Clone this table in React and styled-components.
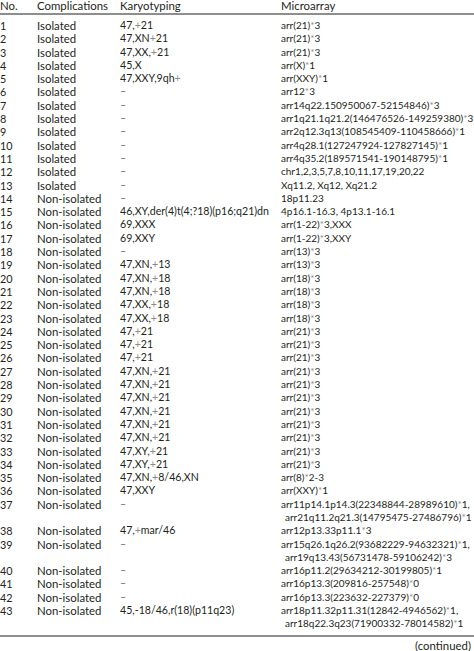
import React from "react";
import styled, { createGlobalStyle } from "styled-components";

const GlobalStyle = createGlobalStyle`
  html, body {
    margin: 0;
    padding: 0;
    background: #ffffff;
  }
  body {
    font-family: Lato, "Liberation Sans", sans-serif;
    color: #231f20;
  }
`;

const Page = styled.div`
  width: 474px;
  overflow: hidden;
  font-size: 11.4px;
  line-height: 13.3px;
`;

const Row = styled.div`
  display: grid;
  grid-template-columns: 37px 83px 161px 1fr;
  white-space: nowrap;
`;

const HeaderRow = styled(Row)`
  line-height: 11px;
  padding-bottom: 2px;
  border-bottom: 2px solid #8e8e8e;
`;

const Body = styled.div`
  padding: 4px 0 4px;
  border-bottom: 2px solid #8e8e8e;
`;

// the digit-heavy columns print narrower in the source face
const Cell = styled.div`
  min-width: 0;
  font-size: ${(p) => p.$size || "inherit"};
`;

const Cont = styled.div`
  padding-left: 4px;
`;

const Sym = styled.span`
  color: #8a8a8a;
`;

const Dash = styled.span`
  color: #6d6d6d;
`;

const Footer = styled.div`
  margin-top: 2px;
  text-align: right;
  padding-right: 3px;
`;

// wrap the + and * glyphs, which print lighter in the source
const fmt = (s) => {
  if (s === "–") return <Dash>–</Dash>;
  return s.split(/([+*])/).map((part, i) =>
    part === "+" || part === "*" ? <Sym key={i}>{part}</Sym> : part
  );
};

const rows = [
  ["1", "Isolated", "47,+21", ["arr(21)*3"]],
  ["2", "Isolated", "47,XN+21", ["arr(21)*3"]],
  ["3", "Isolated", "47,XX,+21", ["arr(21)*3"]],
  ["4", "Isolated", "45,X", ["arr(X)*1"]],
  ["5", "Isolated", "47,XXY,9qh+", ["arr(XXY)*1"]],
  ["6", "Isolated", "–", ["arr12*3"]],
  ["7", "Isolated", "–", ["arr14q22.150950067-52154846)*3"]],
  ["8", "Isolated", "–", ["arr1q21.1q21.2(146476526-149259380)*3"]],
  ["9", "Isolated", "–", ["arr2q12.3q13(108545409-110458666)*1"]],
  ["10", "Isolated", "–", ["arr4q28.1(127247924-127827145)*1"]],
  ["11", "Isolated", "–", ["arr4q35.2(189571541-190148795)*1"]],
  ["12", "Isolated", "–", ["chr1,2,3,5,7,8,10,11,17,19,20,22"]],
  ["13", "Isolated", "–", ["Xq11.2, Xq12, Xq21.2"]],
  ["14", "Non-isolated", "–", ["18p11.23"]],
  ["15", "Non-isolated", "46,XY,der(4)t(4;?18)(p16;q21)dn", ["4p16.1-16.3, 4p13.1-16.1"]],
  ["16", "Non-isolated", "69,XXX", ["arr(1-22)*3,XXX"]],
  ["17", "Non-isolated", "69,XXY", ["arr(1-22)*3,XXY"]],
  ["18", "Non-isolated", "–", ["arr(13)*3"]],
  ["19", "Non-isolated", "47,XN,+13", ["arr(13)*3"]],
  ["20", "Non-isolated", "47,XN,+18", ["arr(18)*3"]],
  ["21", "Non-isolated", "47,XN,+18", ["arr(18)*3"]],
  ["22", "Non-isolated", "47,XX,+18", ["arr(18)*3"]],
  ["23", "Non-isolated", "47,XX,+18", ["arr(18)*3"]],
  ["24", "Non-isolated", "47,+21", ["arr(21)*3"]],
  ["25", "Non-isolated", "47,+21", ["arr(21)*3"]],
  ["26", "Non-isolated", "47,+21", ["arr(21)*3"]],
  ["27", "Non-isolated", "47,XN,+21", ["arr(21)*3"]],
  ["28", "Non-isolated", "47,XN,+21", ["arr(21)*3"]],
  ["29", "Non-isolated", "47,XN,+21", ["arr(21)*3"]],
  ["30", "Non-isolated", "47,XN,+21", ["arr(21)*3"]],
  ["31", "Non-isolated", "47,XN,+21", ["arr(21)*3"]],
  ["32", "Non-isolated", "47,XN,+21", ["arr(21)*3"]],
  ["33", "Non-isolated", "47,XY,+21", ["arr(21)*3"]],
  ["34", "Non-isolated", "47,XY,+21", ["arr(21)*3"]],
  ["35", "Non-isolated", "47,XN,+8/46,XN", ["arr(8)*2-3"]],
  ["36", "Non-isolated", "47,XXY", ["arr(XXY)*1"]],
  ["37", "Non-isolated", "–", ["arr11p14.1p14.3(22348844-28989610)*1,", "arr21q11.2q21.3(14795475-27486796)*1"]],
  ["38", "Non-isolated", "47,+mar/46", ["arr12p13.33p11.1*3"]],
  ["39", "Non-isolated", "–", ["arr15q26.1q26.2(93682229-94632321)*1,", "arr19q13.43(56731478-59106242)*3"]],
  ["40", "Non-isolated", "–", ["arr16p11.2(29634212-30199805)*1"]],
  ["41", "Non-isolated", "–", ["arr16p13.3(209816-257548)*0"]],
  ["42", "Non-isolated", "–", ["arr16p13.3(223632-227379)*0"]],
  ["43", "Non-isolated", "45,-18/46,r(18)(p11q23)", ["arr18p11.32p11.31(12842-4946562)*1,", "arr18q22.3q23(71900332-78014582)*1"]],
];

export default function App() {
  return (
    <Page>
      <GlobalStyle />
      <HeaderRow>
        <Cell>No.</Cell>
        <Cell>Complications</Cell>
        <Cell>Karyotyping</Cell>
        <Cell>Microarray</Cell>
      </HeaderRow>
      <Body>
        {rows.map(([no, comp, karyo, micro]) => (
          <Row key={no}>
            <Cell $size="10.8px">{no}</Cell>
            <Cell>{comp}</Cell>
            <Cell $size="10.6px">{fmt(karyo)}</Cell>
            <Cell $size="10px">
              {micro.map((line, i) =>
                i === 0 ? <div key={i}>{fmt(line)}</div> : <Cont key={i}>{fmt(line)}</Cont>
              )}
            </Cell>
          </Row>
        ))}
      </Body>
      <Footer>(continued)</Footer>
    </Page>
  );
}
